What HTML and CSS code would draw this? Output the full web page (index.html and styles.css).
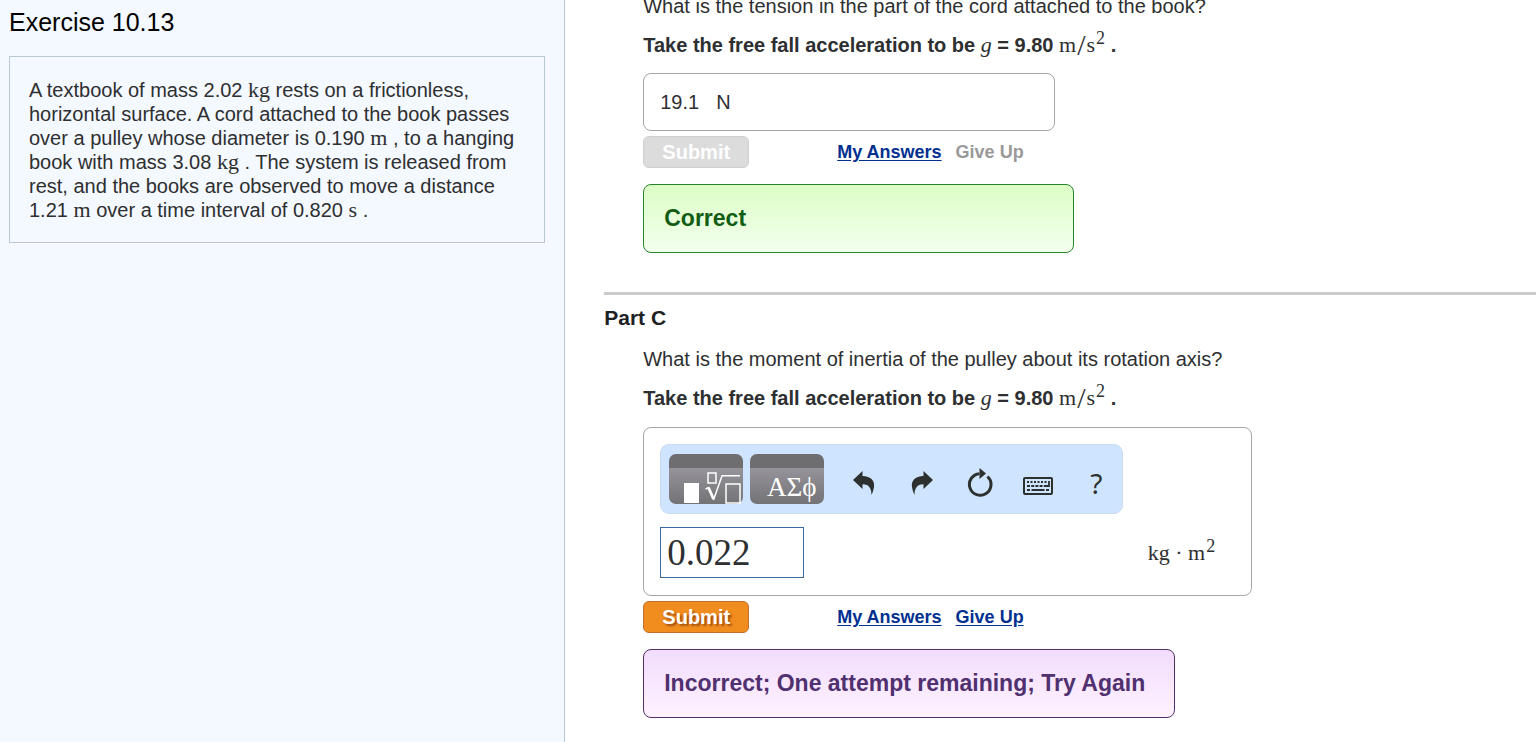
FILE: index.html
```html
<!DOCTYPE html>
<html lang="en">
<head>
<meta charset="utf-8">
<title>Exercise 10.13</title>
<link rel="stylesheet" href="styles.css">
</head>
<body>
<div class="layout">
  <aside class="sidebar">
    <h1 class="title">Exercise 10.13</h1>
    <div class="intro">A textbook of mass 2.02 <span class="math">kg</span> rests on a frictionless, horizontal surface. A cord attached to the book passes over a pulley whose diameter is 0.190 <span class="math">m</span> , to a hanging book with mass 3.08 <span class="math">kg</span> . The system is released from rest, and the books are observed to move a distance 1.21&nbsp;<span class="math">m</span> over a time interval of 0.820 <span class="math">s</span> .</div>
  </aside>
  <main class="content">
    <section class="part part-first">
      <div class="part-body">
        <p class="question">What is the tension in the part of the cord attached to the book?</p>
        <p class="note">Take the free fall acceleration to be <i class="math">g</i> = 9.80 <span class="math">m<span class="slash">/</span>s<sup>2</sup></span> .</p>
        <div class="answer answer-static"><span>19.1</span><span>N</span></div>
        <div class="actions">
          <button class="submit" type="button" disabled>Submit</button>
          <a class="link" href="#">My Answers</a>
          <span class="link-off">Give Up</span>
        </div>
        <div class="feedback correct">Correct</div>
      </div>
    </section>
    <section class="part part-c">
      <h2 class="part-title">Part C</h2>
      <div class="part-body">
        <p class="question">What is the moment of inertia of the pulley about its rotation axis?</p>
        <p class="note">Take the free fall acceleration to be <i class="math">g</i> = 9.80 <span class="math">m<span class="slash">/</span>s<sup>2</sup></span> .</p>
        <div class="answer answer-editor">
          <div class="toolbar">
            <button class="palette" type="button" aria-label="Templates">
              <svg width="74" height="50" viewBox="0 0 74 50" fill="none" stroke="#fff">
                <rect x="15" y="29" width="15" height="20" fill="#fff" stroke="none"/>
                <rect x="39" y="19" width="8" height="10" stroke-width="1.5"/>
                <path d="M36.500 35 L40 33.500" stroke-width="1.5"/>
                <path d="M39.500 33.500 L44.500 45" stroke-width="2.800"/>
                <path d="M44.500 46 L53 21.800 H71" stroke-width="1.5"/>
                <rect x="57" y="30" width="14" height="19" stroke-width="1.5"/>
              </svg>
            </button>
            <button class="palette symbols" type="button" aria-label="Greek symbols">ΑΣϕ</button>
            <div class="tools">
              <button class="tool" type="button" aria-label="Undo">
                <svg width="22" height="24" viewBox="0 0 22 24" fill="#2c302e"><path d="M0 9 L9.500 0 V5 C18 5 22 10 21 16 C20.500 19 19.500 22 18.500 24 C18.500 18 16.500 13.200 9.500 13.200 V18 Z"/></svg>
              </button>
              <button class="tool" type="button" aria-label="Redo">
                <svg width="22" height="24" viewBox="0 0 22 24" fill="#2c302e"><path d="M22 9 L12.500 0 V5 C4 5 0 10 1 16 C1.500 19 2.500 22 3.500 24 C3.500 18 5.500 13.200 12.500 13.200 V18 Z"/></svg>
              </button>
              <button class="tool" type="button" aria-label="Reset">
                <svg width="26" height="30" viewBox="0 0 26 30"><path d="M20.500 8.500 A10.800 10.800 0 1 1 12.500 5.700" fill="none" stroke="#2c302e" stroke-width="3"/><path d="M12.500 0 L19 5.500 L12.500 11 Z" fill="#2c302e"/></svg>
              </button>
              <button class="tool low" type="button" aria-label="Keyboard">
                <svg width="30" height="18" viewBox="0 0 30 18" fill="none" stroke="#2c302e"><rect x="1" y="1" width="28" height="16" rx="1" stroke-width="2"/><path d="M4 5 H24" stroke-width="2" stroke-dasharray="2 1.500"/><path d="M4 9 H23" stroke-width="2" stroke-dasharray="3 1.200"/><path d="M26 4 V9 H23" stroke-width="1.800"/><path d="M4 13 H7 M8.500 13 H21.500 M23 13 H26" stroke-width="2"/></svg>
              </button>
              <button class="tool help" type="button" aria-label="Help">?</button>
            </div>
          </div>
          <div class="entry">
            <input class="value" type="text" value="0.022" aria-label="Moment of inertia">
            <span class="math">kg · m<sup>2</sup></span>
          </div>
        </div>
        <div class="actions">
          <button class="submit" type="button">Submit</button>
          <a class="link" href="#">My Answers</a>
          <a class="link" href="#">Give Up</a>
        </div>
        <div class="feedback incorrect">Incorrect; One attempt remaining; Try Again</div>
      </div>
    </section>
  </main>
</div>
</body>
</html>
```
FILE: styles.css
```css
* { box-sizing: border-box; }
body {
  margin: 0;
  background: #fff;
  color: #2e2f31;
  font: 20px/24px "Liberation Sans", Arial, sans-serif;
}
button, input { font: inherit; margin: 0; padding: 0; }
p, h1, h2 { margin: 0; }
.layout { display: flex; height: 100vh; overflow: hidden; }
.sidebar {
  flex: 0 0 36.8%;
  padding: 8px 19px 0 9px;
  background: #f4f8ff;
  border-right: 1px solid #b7c9d2;
}
.title { color: #000; font-size: 25px; font-weight: 400; line-height: 28px; }
.intro {
  margin-top: 20px;
  padding: 21px 19px 20px;
  border: 1px solid #b9c8cf;
}
.math {
  font-family: "Liberation Serif", "Times New Roman", serif;
  font-size: 22px;
  font-weight: 400;
  line-height: 20px;
}
.math sup { margin-left: 1px; font-size: 18px; line-height: 0; vertical-align: 8px; }
.slash { margin: 0 1px; font-size: 30px; line-height: 0; vertical-align: -3px; }
.content { flex: 1; min-width: 0; padding-left: 39px; }
.part-first { margin-top: -6px; }
.part-body { padding-left: 39px; }
.note { margin-top: 15px; font-weight: 700; }
.answer {
  margin-top: 16px;
  max-width: 100%;
  border: 1px solid #a6a6a6;
  border-radius: 8px;
}
.answer-static { display: flex; gap: 17px; width: 412px; padding: 16px; }
.answer-editor { width: 609px; margin-top: 17px; padding: 16px 16px 17px; }
.actions { display: flex; align-items: center; gap: 14px; margin-top: 5px; font-size: 18px; font-weight: 700; }
.submit {
  width: 106px;
  height: 32px;
  margin-right: 74px;
  border: 1px solid #c0702c;
  border-radius: 6px;
  background: #f18c1f;
  color: #fff;
  font-size: 20px;
  text-shadow: 2px 2px 2px #a05010;
}
.submit:disabled { border-color: #cfcfcf; background: #dcdcdc; text-shadow: none; }
.link { color: #00308f; text-decoration: underline; text-underline-offset: 2px; }
.link-off { color: #999; }
.feedback {
  max-width: 100%;
  margin-top: 16px;
  padding: 21px 20px;
  border: 1px solid;
  border-radius: 8px;
  font-size: 23px;
  font-weight: 700;
  line-height: 25px;
}
.correct {
  width: 431px;
  border-color: #26852a;
  background: linear-gradient(#dcfec6, #f3ffee);
  color: #125c14;
}
.incorrect {
  width: 532px;
  border-color: #553068;
  background: linear-gradient(#f1dcfd, #fff2ff);
  color: #50306f;
}
.part-c { margin-top: 39px; border-top: 3px solid #ccc; padding-top: 11px; }
.part-title { color: #1e2123; font-size: 21px; line-height: 24px; }
.part-c .question { margin-top: 17px; }
.toolbar {
  display: flex;
  gap: 7px;
  width: 463px;
  max-width: 100%;
  padding: 9px 0 9px 8px;
  border: 1px solid #cbdcf0;
  border-radius: 9px;
  background: #cfe5ff;
}
.palette {
  display: block;
  flex: none;
  width: 74px;
  height: 50px;
  border: 0;
  border-radius: 7px;
  background: linear-gradient(#6e6e70 0 14px, #96949b 14px, #737275 50px);
  color: #fff;
}
.palette svg { display: block; }
.symbols { padding: 16px 0 0 9px; font: 27px/34px "Liberation Serif", serif; }
.tools { display: flex; flex: none; margin-left: 4px; }
.tool {
  display: flex;
  flex: none;
  align-items: center;
  justify-content: center;
  width: 58px;
  height: 50px;
  padding-top: 8px;
  border: 0;
  background: none;
  color: #2c302e;
}
.low { padding-top: 14px; }
.help { font: 28px/32px "Noto Sans", sans-serif; }
.entry { display: flex; align-items: center; justify-content: space-between; margin-top: 13px; padding-right: 20px; }
.value {
  width: 144px;
  height: 51px;
  padding: 0 6px;
  border: 1px solid #3a6a9c;
  background: #fff;
  color: #2e2f31;
  font: 37px/44px "Liberation Serif", "Times New Roman", serif;
}
```
